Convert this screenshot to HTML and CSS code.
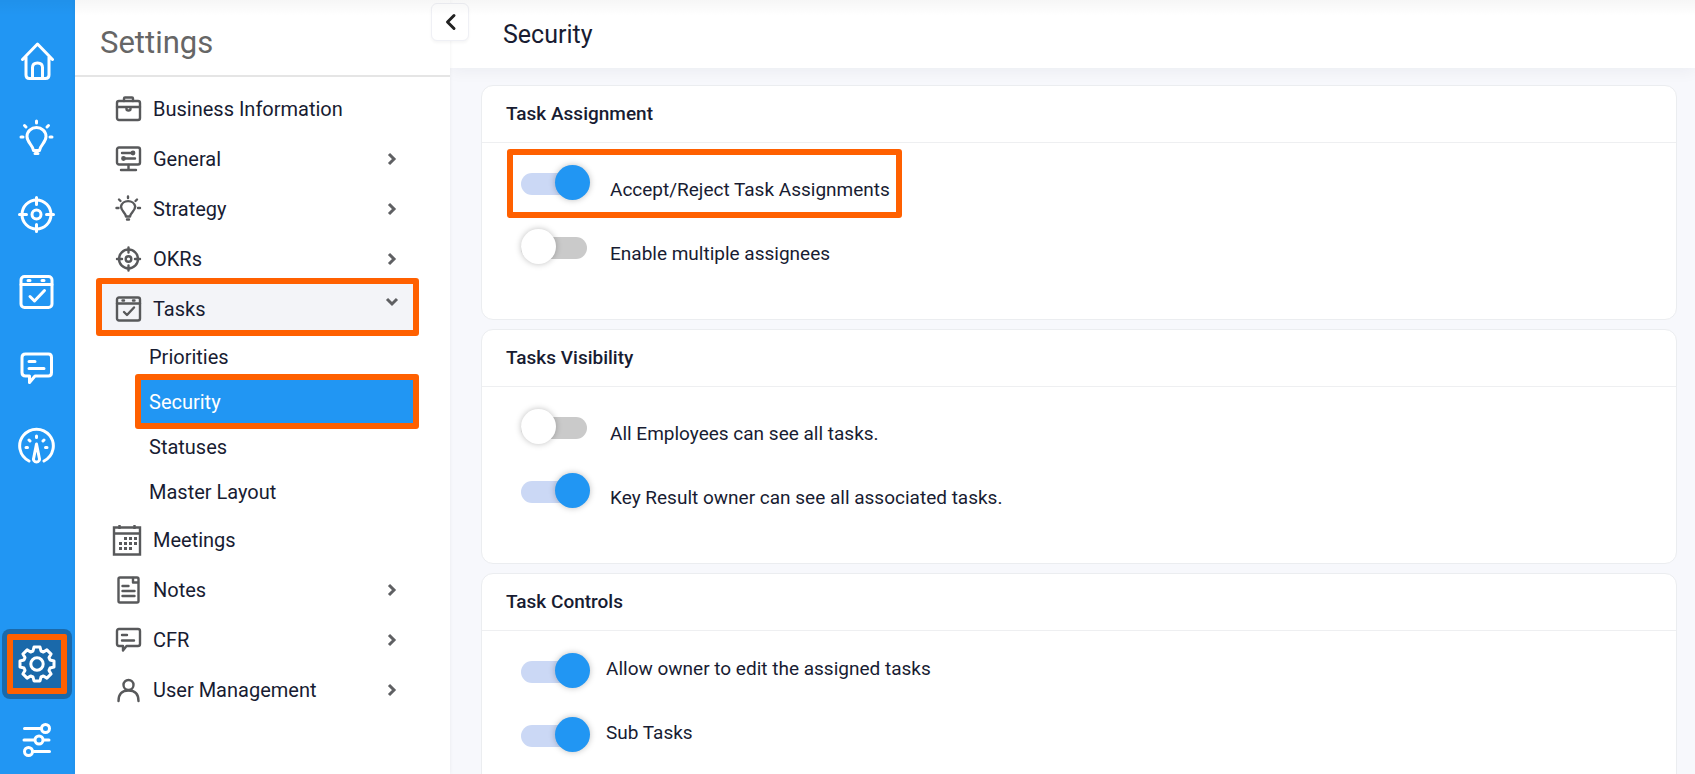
FILE: index.html
```html
<!DOCTYPE html>
<html lang="en">
<head>
  <meta charset="utf-8">
  <title>Settings - Security</title>
  <link rel="stylesheet" href="styles.css">
</head>

<body>
  <div class="app">
    <nav class="rail" aria-label="Main">
      <a href="#" aria-label="Home">
        <svg viewBox="0 0 38 38"><path d="M4.500 17.500L19.500 2 34.500 17.500M8 15v18q0 3.500 3.500 3.500h16q3.500 0 3.500-3.500V15M14.500 36V25.500q0-4.500 5-4.500t5 4.500V36"/></svg>
      </a>
      <a href="#" aria-label="Strategy">
        <svg viewBox="0 0 38 38"><path d="M15.500 31.500c-1-6-6.500-8-6.500-14a9.500 9 0 0 1 19 0c0 6-5.500 8-6.500 14zM17 34.500h3M18.500 2v2M3 18h2M32 18h2M6.500 6.500l1.500 1.500M30.500 6.500L29 8"/></svg>
      </a>
      <a href="#" aria-label="OKRs">
        <svg viewBox="0 0 38 38"><circle cx="18.500" cy="18.500" r="14.500"/><circle cx="18.500" cy="18.500" r="4.500"/><path d="M18.500 1.500v7M18.500 28.500v7M1.500 18.500h7M28.500 18.500h7"/></svg>
      </a>
      <a href="#" aria-label="Tasks">
        <svg viewBox="0 0 38 38"><rect x="3" y="3.500" width="31" height="31" rx="3.500"/><path d="M3 11.500h31M10 7.500h2M24 7.500h2M12 23.500l4.500 4.500L26.500 17.500"/></svg>
      </a>
      <a href="#" aria-label="Conversations">
        <svg viewBox="0 0 38 38"><path d="M7.500 4h23q3 0 3 3.500v15q0 3.500-3 3.500H17L11.500 32.500V26h-4Q4 26 4 22.500v-15Q4 4 7.500 4zM11 11.500h6M11 18.500h15"/></svg>
      </a>
      <a href="#" aria-label="Dashboard">
        <svg viewBox="0 0 38 38"><path d="M11 34a16.800 16.800 0 1 1 15 0M18.500 17l-2.800 14a3 3 0 1 0 5.600 0zM8 20.500h1.500M27.500 20.500H29M18.500 9v1.500M11 13l1 1M26 13l-1 1"/></svg>
      </a>
      <a href="#" class="settings" aria-label="Settings">
        <svg viewBox="0 0 38 38"><path d="M15 6l1-4h6l1 4 2.400 1 3.500-2.100 4.200 4.200L31 12.600l1 2.400 4 1v6l-4 1-1 2.400 2.100 3.500-4.200 4.200L25.400 31 23 32l-1 4h-6l-1-4-2.400-1-3.500 2.100-4.200-4.200L7 25.400 6 23l-4-1v-6l4-1 1-2.400-2.100-3.500 4.200-4.200L12.600 7z"/><circle cx="19" cy="19" r="6.200"/></svg>
      </a>
      <a href="#" aria-label="Preferences">
        <svg viewBox="0 0 38 38"><path d="M6.500 7.500h17M6 19h10.500M25.500 19h5.500M16 30.500h15.500"/><circle cx="27.500" cy="7.500" r="4"/><circle cx="21" cy="19" r="4"/><circle cx="10.500" cy="30.500" r="4"/></svg>
      </a>
    </nav>

    <aside class="sidebar">
      <h1>Settings</h1>
      <button type="button" class="collapse" aria-label="Collapse">
        <svg viewBox="0 0 16 20"><path d="M12 3.500L5.500 10 12 16.500"/></svg>
      </button>
      <ul class="menu">
        <li><a href="#">
          <svg class="icon" viewBox="0 0 28 28"><rect x="3" y="6" width="23" height="19" rx="2"/><path d="M3 12h23M10 6V3.500q0-1 1-1h7q1 0 1 1V6M12.500 12v2q0 1.500 2 1.500t2-1.500v-2"/></svg>
          Business Information</a></li>
        <li><a href="#">
          <svg class="icon" viewBox="0 0 28 28"><rect x="3" y="2.500" width="23" height="17" rx="2"/><path d="M8 8h11M10 13.500h11M14.500 20v4.500M7 25h15"/><circle cx="19" cy="8" r="1.200"/><circle cx="9.500" cy="13.500" r="1.200"/></svg>
          General<svg class="chev" viewBox="0 0 14 14"><path d="M4 2l5 5-5 5"/></svg></a></li>
        <li><a href="#">
          <svg class="icon" viewBox="0 0 28 28"><path d="M12 21.500c-.5-4-5-5.500-5-10a7.200 6.500 0 0 1 14.200 0c0 4.500-4.700 6-5.200 10zM13 24.500h2M14 1.500v1.500M2.500 13h2M24 13h2M5 4.500l1.500 1.500M23 4.500L21.500 6"/></svg>
          Strategy<svg class="chev" viewBox="0 0 14 14"><path d="M4 2l5 5-5 5"/></svg></a></li>
        <li><a href="#">
          <svg class="icon" viewBox="0 0 28 28"><circle cx="14.500" cy="14" r="9.500"/><circle cx="14.500" cy="14" r="2.800"/><path d="M14.500 2.500v5M14.500 20.500v5M3 14h5M21 14h5"/></svg>
          OKRs<svg class="chev" viewBox="0 0 14 14"><path d="M4 2l5 5-5 5"/></svg></a></li>
        <li><a href="#" class="open marked">
          <svg class="icon" viewBox="0 0 28 28"><rect x="3" y="2.500" width="23" height="23" rx="2"/><path d="M3 8.500h23M8.500 5.500h1.500M19 5.500h1.500M10 17l3 3 7-7.500"/></svg>
          Tasks<svg class="chev" viewBox="0 0 14 14"><path d="M2 4l5 5 5-5"/></svg></a>
          <ul class="submenu">
            <li><a href="#">Priorities</a></li>
            <li><a href="#" class="current marked">Security</a></li>
            <li><a href="#">Statuses</a></li>
            <li><a href="#">Master Layout</a></li>
          </ul>
        </li>
        <li><a href="#">
          <svg class="icon big" viewBox="0 0 32 32"><path d="M3 3.500h26v27H3zM3 9.500h26M8.500 1v4M23.500 1v4"/><path class="dots" d="M13 14.500h13M8 19.500h18M8 24.500h13"/></svg>
          Meetings</a></li>
        <li><a href="#">
          <svg class="icon" viewBox="0 0 28 28"><rect x="4.500" y="1.500" width="20" height="25" rx="1.500"/><path d="M19 2v4.500h5M8.500 10h6M8.500 15h12M8.500 20h12"/></svg>
          Notes<svg class="chev" viewBox="0 0 14 14"><path d="M4 2l5 5-5 5"/></svg></a></li>
        <li><a href="#">
          <svg class="icon" viewBox="0 0 28 28"><path d="M5 3h19q2 0 2 2v13q0 2-2 2H12.500L9 24.500V20H5q-2 0-2-2V5q0-2 2-2zM8 9h5M8 14.500h12"/></svg>
          CFR<svg class="chev" viewBox="0 0 14 14"><path d="M4 2l5 5-5 5"/></svg></a></li>
        <li><a href="#">
          <svg class="icon" viewBox="0 0 28 28"><circle cx="14.500" cy="9" r="5"/><path d="M4.500 25q0-10.500 10-10.500T24.500 25"/></svg>
          User Management<svg class="chev" viewBox="0 0 14 14"><path d="M4 2l5 5-5 5"/></svg></a></li>
      </ul>
    </aside>

    <main>
      <header>
        <h2>Security</h2>
      </header>
      <div class="cards">
        <section class="card">
          <h3>Task Assignment</h3>
          <div class="options">
            <label class="option marked"><input type="checkbox" role="switch" checked><span>Accept/Reject Task Assignments</span></label>
            <label class="option"><input type="checkbox" role="switch"><span>Enable multiple assignees</span></label>
          </div>
        </section>
        <section class="card">
          <h3>Tasks Visibility</h3>
          <div class="options">
            <label class="option"><input type="checkbox" role="switch"><span>All Employees can see all tasks.</span></label>
            <label class="option"><input type="checkbox" role="switch" checked><span>Key Result owner can see all associated tasks.</span></label>
          </div>
        </section>
        <section class="card">
          <h3>Task Controls</h3>
          <div class="options compact">
            <label class="option"><input type="checkbox" role="switch" checked><span>Allow owner to edit the assigned tasks</span></label>
            <label class="option"><input type="checkbox" role="switch" checked><span>Sub Tasks</span></label>
          </div>
        </section>
      </div>
    </main>
  </div>
</body>

</html>
```
FILE: styles.css
```css
:root {
  --blue: #2196f3;
  --orange: #ff6000;
  --text: #181c32;
  --icon: #58595b;
  --page: #f7f8fc;
}

* {
  box-sizing: border-box;
}

body {
  margin: 0;
  font-family: Roboto, sans-serif;
  color: var(--text);
  background: var(--page);
}

h1, h2, h3, ul {
  margin: 0;
  padding: 0;
}

ul {
  list-style: none;
}

a {
  color: inherit;
  text-decoration: none;
}

svg {
  display: block;
  flex: none;
  fill: none;
  stroke: currentColor;
  stroke-linecap: round;
  stroke-linejoin: round;
}

.app {
  position: relative;
  display: flex;
  height: 100vh;
  overflow: hidden;
}

/* soft shade falling from the top edge of the window */
.app::before {
  content: "";
  position: absolute;
  inset: 0 0 auto;
  height: 16px;
  background: linear-gradient(rgba(0, 0, 0, 0.035), rgba(0, 0, 0, 0));
  z-index: 5;
  pointer-events: none;
}

/* icon rail */
.rail {
  display: flex;
  flex-direction: column;
  flex: none;
  width: 75px;
  padding: 22px 3px 0 2px;
  background: var(--blue);
  color: white;
}

.rail a {
  position: relative;
  display: flex;
  align-items: center;
  justify-content: center;
  flex: none;
  height: 77px;
}

.rail svg {
  width: 38px;
  height: 38px;
  stroke-width: 3;
}

.rail .settings {
  height: 70px;
  margin-top: auto;
  background: #1a69aa;
  border-radius: 8px;
}

.rail .settings::after {
  content: "";
  position: absolute;
  inset: 5px;
  border: 6px solid var(--orange);
  border-radius: 2px;
}

.rail .settings + a {
  height: 75px;
  padding-top: 6px;
}

/* sidebar */
.sidebar {
  position: relative;
  flex: none;
  width: 375px;
  background: white;
  box-shadow: 0 0 4px rgba(0, 0, 0, 0.06);
  z-index: 2;
}

.sidebar h1 {
  height: 77px;
  padding: 9px 25px 0;
  border-bottom: 2px solid #e5e5e5;
  font-size: 31px;
  font-weight: 400;
  line-height: 68px;
  color: #666;
}

.collapse {
  position: absolute;
  top: 3px;
  right: -19px;
  display: flex;
  align-items: center;
  justify-content: center;
  width: 38px;
  height: 38px;
  padding: 0;
  border: 1px solid #eff0f5;
  border-radius: 6px;
  background: white;
  box-shadow: 0 2px 3px rgba(0, 0, 0, 0.04);
  color: #222;
}

.collapse svg {
  width: 16px;
  height: 20px;
  stroke-width: 3;
}

.menu {
  padding: 7px 37px 0 27px;
  font-size: 20px;
}

.menu a {
  position: relative;
  display: flex;
  align-items: center;
  height: 50px;
  padding: 0 14px 0 12px;
}

.icon {
  width: 28px;
  height: 28px;
  margin-right: 11px;
  stroke-width: 2.4;
  color: var(--icon);
}

.icon.big {
  width: 32px;
  height: 32px;
  margin: 0 10px 0 -3px;
  stroke-linecap: butt;
  stroke-linejoin: miter;
}

.icon .dots {
  stroke-width: 3;
  stroke-dasharray: 3 2;
}

.chev {
  width: 14px;
  height: 14px;
  margin-left: auto;
  stroke-width: 3;
  stroke-linecap: butt;
  stroke-linejoin: miter;
  color: #5f6063;
}

.menu .open {
  background: #f3f4f8;
}

.open .chev {
  margin-bottom: 14px;
}

.submenu {
  padding: 0 0 1px 39px;
}

.submenu a {
  height: 45px;
  padding: 0 8px;
}

.submenu .current {
  background: var(--blue);
  color: white;
}

.marked::after {
  content: "";
  position: absolute;
  inset: -6px -6px -2px;
  border: 6px solid var(--orange);
  border-radius: 3px;
  pointer-events: none;
}

.current.marked::after {
  inset: -5px -6px;
}

/* content */
main {
  display: flex;
  flex-direction: column;
  flex: 1;
  min-width: 0;
}

main header {
  flex: none;
  padding: 2px 53px 0;
  background: white;
  box-shadow: 0 2px 16px rgba(24, 28, 50, 0.06);
}

main h2 {
  font-size: 25px;
  font-weight: 400;
  line-height: 66px;
}

.cards {
  display: flex;
  flex-direction: column;
  gap: 9px;
  padding: 17px 18px 0 31px;
}

.card {
  flex: none;
  background: white;
  border: 1px solid #ebedf0;
  border-radius: 12px;
}

.card h3 {
  padding: 0 24px;
  border-bottom: 1px solid #eeeff1;
  font-size: 19px;
  font-weight: 500;
  line-height: 56px;
}

.options {
  display: flex;
  flex-direction: column;
  align-items: flex-start;
  gap: 29px;
  padding: 22px 39px 55px;
}

.option {
  position: relative;
  display: flex;
  align-items: center;
  gap: 19px;
  height: 35px;
  font-size: 19px;
}

.option span {
  padding-top: 14px;
}

.compact .option {
  gap: 15px;
}

.compact span {
  padding: 0 0 4px;
}

.option.marked::after {
  inset: -16px -12px -18px -14px;
}

/* toggle switch */
.option input {
  appearance: none;
  position: relative;
  width: 70px;
  height: 35px;
  margin: 0;
}

.option input::before {
  content: "";
  position: absolute;
  inset: 8px 4px 5px 0;
  border-radius: 11px;
  background: #cacaca;
}

.option input::after {
  content: "";
  position: absolute;
  top: 0;
  left: 0;
  width: 35px;
  height: 35px;
  border-radius: 50%;
  background: white;
  box-shadow: 0 0 6px rgba(0, 0, 0, 0.25);
}

.option input:checked::before {
  background: #cbd8f5;
}

.option input:checked::after {
  left: 34px;
  background: var(--blue);
}
```
